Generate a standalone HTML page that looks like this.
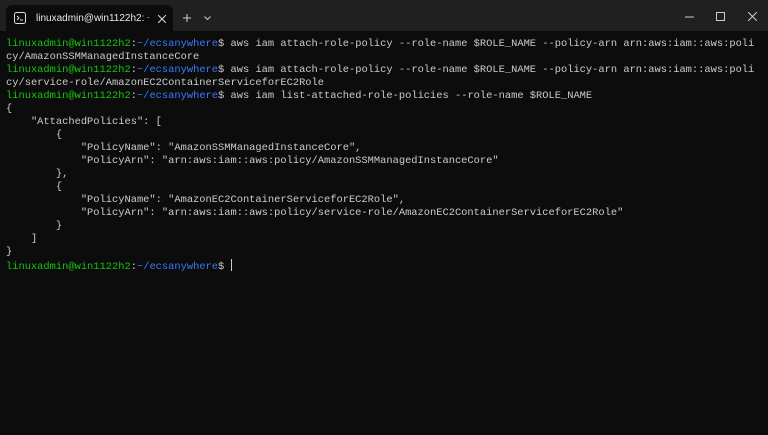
<!DOCTYPE html>
<html><head><style>
body{margin:0;width:768px;height:435px;background:#0c0c0c;overflow:hidden;font-family:"Liberation Sans",sans-serif;}
.tb{position:absolute;left:0;top:0;width:768px;height:31px;background:#202020;}
.tab{position:absolute;left:6px;top:5px;width:167px;height:27px;background:#0c0c0c;border-radius:6px 6px 0 0;}
.tab .t{position:absolute;left:30px;top:8px;width:113px;overflow:hidden;font-size:10px;color:#e8e8e8;white-space:nowrap;}
.term{position:absolute;left:6px;top:38px;font-family:"Liberation Mono",monospace;font-size:10.4px;color:#cccccc;}
.term div{height:13px;line-height:13px;white-space:pre;overflow:visible}
.g{color:#16c60c}.b{color:#3b78ff}
.cur{display:inline-block;width:1px;height:12px;background:#ccc;vertical-align:-2px}
</style></head><body>
<div class="tb">
<div class="tab">
<svg style="position:absolute;left:8px;top:7px" width="12" height="12" viewBox="0 0 12 12"><rect x="0.5" y="0.5" width="11" height="11" rx="2" fill="none" stroke="#ddd"/><path d="M3 4l2 2-2 2M6 8h3" stroke="#ddd" fill="none"/></svg>
<div class="t">linuxadmin@win1122h2: ~/ec</div>
<svg style="position:absolute;left:152px;top:10px" width="8" height="8" viewBox="0 0 8 8"><path d="M0 0L8 8M8 0L0 8" stroke="#ddd"/></svg>
</div>
<svg style="position:absolute;left:183px;top:14px" width="8" height="8"><path d="M4 0v8M0 4h8" stroke="#ccc"/></svg>
<svg style="position:absolute;left:204px;top:16px" width="7" height="5"><path d="M0.5 0.5L3.5 3.5 6.5 0.5" stroke="#ccc" fill="none"/></svg>
<svg style="position:absolute;left:685px;top:16px" width="9" height="2"><path d="M0 1h9" stroke="#ccc"/></svg>
<svg style="position:absolute;left:716px;top:12px" width="9" height="9"><rect x="0.5" y="0.5" width="8" height="8" fill="none" stroke="#ccc"/></svg>
<svg style="position:absolute;left:748px;top:12px" width="9" height="9"><path d="M0 0L9 9M9 0L0 9" stroke="#ccc"/></svg>
</div>
<div class="term">
<div><span class="g">linuxadmin@win1122h2</span>:<span class="b">~/ecsanywhere</span>$ aws iam attach-role-policy --role-name $ROLE_NAME --policy-arn arn:aws:iam::aws:poli</div>
<div>cy/AmazonSSMManagedInstanceCore</div>
<div><span class="g">linuxadmin@win1122h2</span>:<span class="b">~/ecsanywhere</span>$ aws iam attach-role-policy --role-name $ROLE_NAME --policy-arn arn:aws:iam::aws:poli</div>
<div>cy/service-role/AmazonEC2ContainerServiceforEC2Role</div>
<div><span class="g">linuxadmin@win1122h2</span>:<span class="b">~/ecsanywhere</span>$ aws iam list-attached-role-policies --role-name $ROLE_NAME</div>
<div>{</div>
<div>    "AttachedPolicies": [</div>
<div>        {</div>
<div>            "PolicyName": "AmazonSSMManagedInstanceCore",</div>
<div>            "PolicyArn": "arn:aws:iam::aws:policy/AmazonSSMManagedInstanceCore"</div>
<div>        },</div>
<div>        {</div>
<div>            "PolicyName": "AmazonEC2ContainerServiceforEC2Role",</div>
<div>            "PolicyArn": "arn:aws:iam::aws:policy/service-role/AmazonEC2ContainerServiceforEC2Role"</div>
<div>        }</div>
<div>    ]</div>
<div>}</div>
<div><span class="g">linuxadmin@win1122h2</span>:<span class="b">~/ecsanywhere</span>$ <span class="cur"></span></div>
</div>
</body></html>
